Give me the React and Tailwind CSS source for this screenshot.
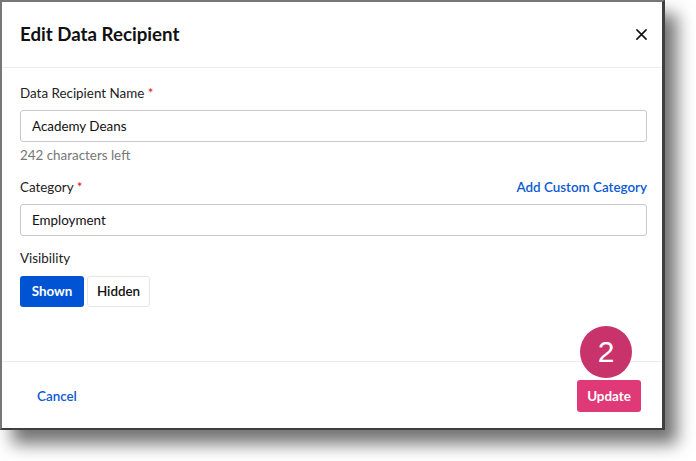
import React from 'react';

const App = () => {
    return (
        <div className="w-[696px] h-[461px] bg-white font-['Lato',sans-serif] text-[#1a1a1a]">
            {/* Modal */}
            <div className="relative w-[665px] h-[430px] bg-white border-t-2 border-l-2 border-[#777] border-r-[3px] border-b-2 border-r-[#3f3f3f] border-b-[#3f3f3f] shadow-[12px_14px_16px_rgba(0,0,0,0.55)] flex flex-col">
                {/* Header */}
                <div className="h-[66px] flex items-center justify-between pl-[18px] pr-[15px] border-b border-[#ececec] shrink-0">
                    <h1 className="text-[18.7px] font-bold text-[#111]">Edit Data Recipient</h1>
                    <svg width="11" height="11" viewBox="0 0 12 12" className="text-[#111]">
                        <path d="M1 1 L11 11 M11 1 L1 11" stroke="currentColor" strokeWidth="1.7" strokeLinecap="round" />
                    </svg>
                </div>

                {/* Body */}
                <div className="flex-1 pl-[18px] pr-[15px] pt-[16px] text-[13.4px]">
                    <label className="block leading-[18px] text-[#222]">
                        Data Recipient Name <span className="text-[#e02020]">*</span>
                    </label>
                    <div className="mt-[8px] h-[32px] border border-[#c9c9c9] rounded-[3px] flex items-center px-[11px] text-[#111]">
                        Academy Deans
                    </div>
                    <p className="mt-[4px] leading-[18px] text-[#777]">242 characters left</p>

                    <div className="mt-[14px] flex justify-between leading-[18px]">
                        <label className="text-[#222]">
                            Category <span className="text-[#e02020]">*</span>
                        </label>
                        <span className="text-[#0b5ad4] font-semibold">Add Custom Category</span>
                    </div>
                    <div className="mt-[8px] h-[32px] border border-[#c9c9c9] rounded-[3px] flex items-center px-[11px] text-[#111]">
                        Employment
                    </div>

                    <label className="block mt-[13px] leading-[18px] text-[#222]">Visibility</label>
                    <div className="mt-[9px] flex gap-[3px]">
                        <button className="w-[64px] h-[31px] rounded-[3px] bg-[#0054d4] text-white font-bold">Shown</button>
                        <button className="w-[63px] h-[31px] rounded-[3px] bg-white border border-[#e6e6e6] text-[#111] font-semibold">Hidden</button>
                    </div>
                </div>

                {/* Footer */}
                <div className="h-[67px] shrink-0 border-t border-[#ececec] flex items-center justify-between pt-[2px] pl-[35px] pr-[21px] text-[13.4px]">
                    <span className="text-[#0b5ad4] font-semibold">Cancel</span>
                    <button className="w-[64px] h-[32px] rounded-[3px] bg-[#df3a77] text-white font-bold">Update</button>
                </div>

                {/* Step badge */}
                <div className="absolute left-[578px] top-[324px] w-[52px] h-[52px] rounded-full bg-[#c9336b] flex items-center justify-center text-white text-[30px] leading-none font-['Liberation_Sans',sans-serif]">
                    2
                </div>
            </div>
        </div>
    );
};

export default App;
